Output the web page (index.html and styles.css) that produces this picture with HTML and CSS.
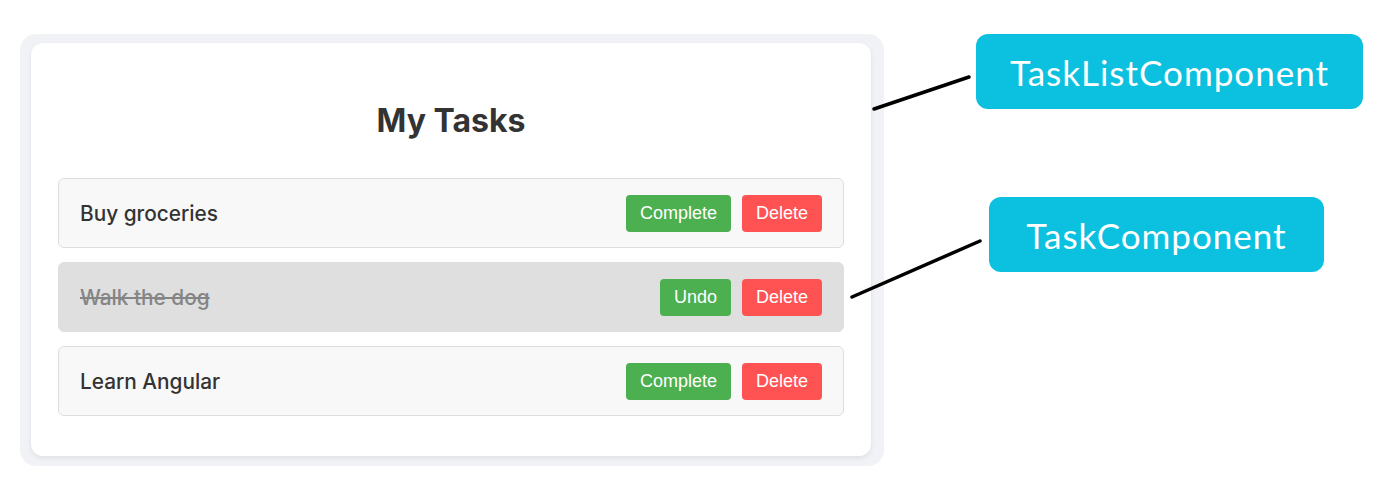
FILE: index.html
```html
<!DOCTYPE html>
<html>
<head>
<meta charset="utf-8">
<link rel="stylesheet" href="styles.css">
</head>
<body>
<div class="stage">
  <div class="frame">
    <div class="card">
      <h1 class="title">My Tasks</h1>
      <div class="task">
        <span class="task-title">Buy groceries</span>
        <div class="actions">
          <button class="btn btn-green">Complete</button>
          <button class="btn btn-red">Delete</button>
        </div>
      </div>
      <div class="task done">
        <span class="task-title">Walk the dog</span>
        <div class="actions">
          <button class="btn btn-green">Undo</button>
          <button class="btn btn-red">Delete</button>
        </div>
      </div>
      <div class="task">
        <span class="task-title">Learn Angular</span>
        <div class="actions">
          <button class="btn btn-green">Complete</button>
          <button class="btn btn-red">Delete</button>
        </div>
      </div>
    </div>
  </div>
  <svg class="connectors" width="1400" height="500" viewBox="0 0 1400 500">
    <line x1="874" y1="109" x2="969" y2="77" stroke="#000" stroke-width="3.5" stroke-linecap="round"/>
    <line x1="852" y1="297" x2="980" y2="241" stroke="#000" stroke-width="3.5" stroke-linecap="round"/>
  </svg>
  <div class="label label-list">TaskListComponent</div>
  <div class="label label-task">TaskComponent</div>
</div>
</body>
</html>
```

FILE: styles.css
```css
html, body {
  margin: 0;
  padding: 0;
  background: #ffffff;
}

.stage {
  position: relative;
  width: 1400px;
  height: 500px;
  box-sizing: border-box;
  padding: 34px 0 0 20px;
  overflow: hidden;
}

.frame {
  width: 864px;
  box-sizing: border-box;
  background: #f1f2f6;
  border-radius: 16px;
  padding: 9px 13px 10px 11px;
}

.card {
  background: #ffffff;
  border-radius: 12px;
  box-shadow: 0 2px 5px rgba(0, 0, 0, 0.08);
  padding: 58px 27px 26px;
}

.title {
  margin: 0 0 37px;
  font-family: Inter, "Liberation Sans", sans-serif;
  font-size: 32px;
  font-weight: 700;
  line-height: 40px;
  text-align: center;
  color: #333333;
}

.task {
  display: flex;
  align-items: center;
  justify-content: space-between;
  height: 70px;
  box-sizing: border-box;
  padding: 0 21px;
  margin-bottom: 14px;
  background: #f8f8f8;
  border: 1px solid #dddddd;
  border-radius: 6px;
}

.task-title {
  font-family: Inter, "Liberation Sans", sans-serif;
  font-size: 20.8px;
  font-weight: 500;
  color: #333333;
}

.task.done {
  background: #dfdfdf;
  border-color: #dfdfdf;
}

.task.done .task-title {
  color: #858585;
  text-decoration: line-through;
}

.actions {
  display: flex;
  gap: 11px;
}

.btn {
  font-family: "Liberation Sans", Arial, sans-serif;
  font-size: 18px;
  line-height: 21px;
  padding: 8px 14px;
  border: none;
  border-radius: 4px;
  color: #ffffff;
  cursor: pointer;
}

.btn-green {
  background: #4caf50;
}

.btn-red {
  background: #ff5252;
}

.connectors {
  position: absolute;
  left: 0;
  top: 0;
  pointer-events: none;
}

.label {
  position: absolute;
  display: flex;
  align-items: center;
  justify-content: center;
  height: 75px;
  box-sizing: border-box;
  background: #0cc1df;
  border-radius: 12px;
  color: #ffffff;
  font-family: Lato, "Noto Sans", sans-serif;
  font-size: 35px;
  letter-spacing: 1px;
}

.label-list {
  left: 976px;
  top: 34px;
  width: 387px;
}

.label-task {
  left: 989px;
  top: 197px;
  width: 335px;
}
```
